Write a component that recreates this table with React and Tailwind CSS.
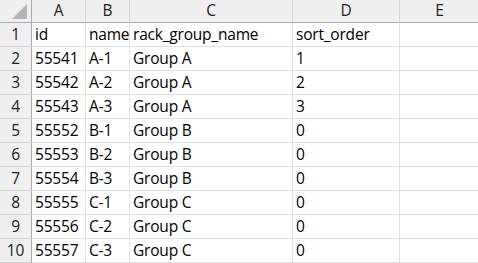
const cols = ["A", "B", "C", "D", "E"];

const rows = [
  ["id", "name", "rack_group_name", "sort_order"],
  ["55541", "A-1", "Group A", "1"],
  ["55542", "A-2", "Group A", "2"],
  ["55543", "A-3", "Group A", "3"],
  ["55552", "B-1", "Group B", "0"],
  ["55553", "B-2", "Group B", "0"],
  ["55554", "B-3", "Group B", "0"],
  ["55555", "C-1", "Group C", "0"],
  ["55556", "C-2", "Group C", "0"],
  ["55557", "C-3", "Group C", "0"],
];

export default function App() {
  return (
    <div className="h-[263px] w-[478px] overflow-hidden bg-white font-['Open_Sans',sans-serif] text-[15.5px] tracking-[-0.2px] text-black">
      <div className="grid grid-cols-[32px_54px_44px_163px_107px_80px] grid-rows-[23px] auto-rows-[24px]">
        {/* corner */}
        <div className="flex items-end justify-end border-r border-b border-[#ababab] bg-[#efefef] pr-[4px] pb-[3px]">
          <div className="h-[15px] w-[15px] bg-[#b5b5b5] [clip-path:polygon(100%_0,100%_100%,0_100%)]" />
        </div>
        {cols.map((c) => (
          <div
            key={c}
            className="flex items-center justify-center border-r border-b border-r-[#d4d4d4] border-b-[#ababab] bg-[#efefef] text-[#222]"
          >
            {c}
          </div>
        ))}
        {rows.map((r, i) => (
          <Row key={i} n={i + 1} cells={r} />
        ))}
      </div>
    </div>
  );
}

function Row({ n, cells }) {
  return (
    <>
      <div className="flex items-center justify-center border-r border-b border-r-[#ababab] border-b-[#d4d4d4] bg-[#efefef] text-[#222]">
        {n}
      </div>
      {cells.map((v, j) => (
        <div
          key={j}
          className="flex items-center whitespace-nowrap border-r border-b border-[#e1e1e1] pl-[3px]"
        >
          {v}
        </div>
      ))}
      <div className="border-r border-b border-[#e1e1e1]" />
    </>
  );
}
